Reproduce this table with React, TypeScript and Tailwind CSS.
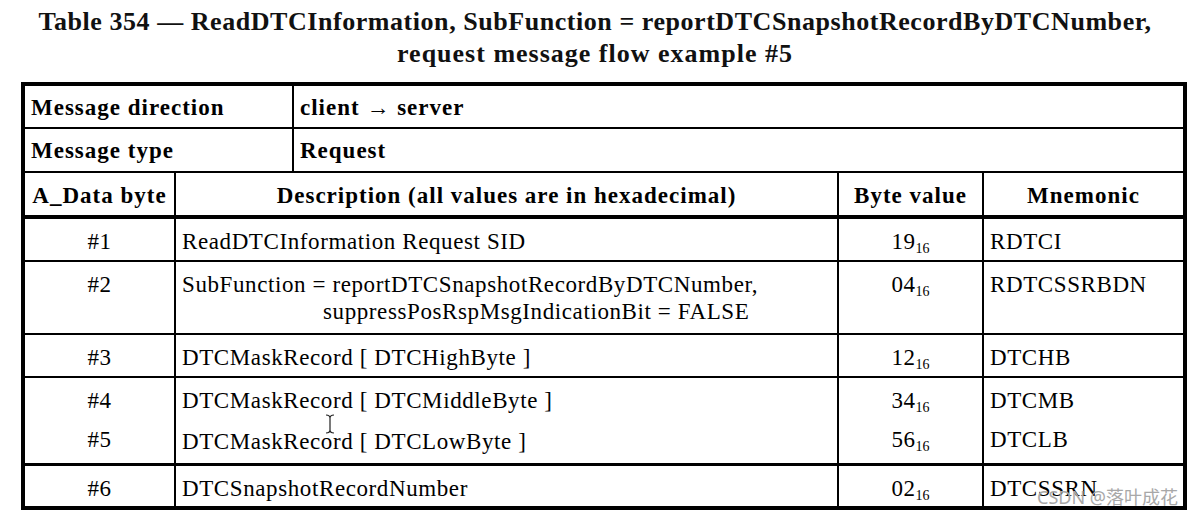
import React from 'react';

const serif = "font-['Liberation_Serif','Times_New_Roman',serif]";

function Hex({ v }: { v: string }) {
  return (
    <span>
      {v}
      <sub className="text-[14px] tracking-normal">16</sub>
    </span>
  );
}

const rows = [
  { n: ['#1'], desc: ['ReadDTCInformation Request SID'], val: ['19'], mn: ['RDTCI'], h: 'h-[43px]', b: 'border-b-2' },
  { n: ['#2'], desc: ['SubFunction = reportDTCSnapshotRecordByDTCNumber,'], desc2: 'suppressPosRspMsgIndicationBit = FALSE', val: ['04'], mn: ['RDTCSSRBDN'], h: 'h-[73px]', b: 'border-b-2' },
  { n: ['#3'], desc: ['DTCMaskRecord [ DTCHighByte ]'], val: ['12'], mn: ['DTCHB'], h: 'h-[43px]', b: 'border-b-2' },
  { n: ['#4', '#5'], desc: ['DTCMaskRecord [ DTCMiddleByte ]', 'DTCMaskRecord [ DTCLowByte ]'], val: ['34', '56'], mn: ['DTCMB', 'DTCLB'], h: 'h-[88px]', b: 'border-b-[3px]' },
  { n: ['#6'], desc: ['DTCSnapshotRecordNumber'], val: ['02'], mn: ['DTCSSRN'], h: 'h-[40px]', b: '' },
];

export default function App() {
  return (
    <div className={`w-[1190px] h-[517px] bg-white text-black relative overflow-hidden ${serif}`}>
      {/* Title */}
      <div className="pt-[6px] text-center font-bold text-[26px] leading-[32px] tracking-[0.55px] text-[#111]">
        <div>Table 354 — ReadDTCInformation, SubFunction = reportDTCSnapshotRecordByDTCNumber,</div>
        <div className="tracking-[1px]">request message flow example #5</div>
      </div>

      {/* Table */}
      <div className="ml-[21px] mt-[12px] w-[1166px] border-4 border-black text-[23px] tracking-[0.6px]">
        <div className="flex h-[43px] border-b-2 border-black font-bold tracking-[1px]">
          <div className="w-[269px] border-r-2 border-black pl-[6px] pt-[3px] flex items-center">Message direction</div>
          <div className="flex-1 pl-[6px] pt-[3px] flex items-center">client → server</div>
        </div>
        <div className="flex h-[44px] border-b-2 border-black font-bold tracking-[1px]">
          <div className="w-[269px] border-r-2 border-black pl-[6px] pt-[3px] flex items-center">Message type</div>
          <div className="flex-1 pl-[6px] pt-[3px] flex items-center">Request</div>
        </div>
        <div className="flex h-[46px] border-b-4 border-black font-bold tracking-[1px]">
          <div className="w-[151px] border-r-2 border-black pt-[4px] flex items-center justify-center">A_Data byte</div>
          <div className="w-[663px] border-r-2 border-black pt-[4px] flex items-center justify-center">Description (all values are in hexadecimal)</div>
          <div className="w-[145px] border-r-2 border-black pt-[4px] flex items-center justify-center">Byte value</div>
          <div className="flex-1 pt-[4px] flex items-center justify-center">Mnemonic</div>
        </div>

        {rows.map((r, i) => (
          <div key={i} className={`flex ${r.h} ${r.b} border-black`}>
            <div className="w-[151px] border-r-2 border-black flex flex-col items-center justify-between pt-[9px] pb-[10px]">
              {r.n.map((t) => (
                <div key={t} className="leading-[27px]">{t}</div>
              ))}
            </div>
            <div className="w-[663px] border-r-2 border-black pl-[6px] flex flex-col justify-between pt-[9px] pb-[8px]">
              {r.desc.map((t) => (
                <div key={t} className="leading-[27px] whitespace-nowrap">{t}</div>
              ))}
              {r.desc2 && <div className="leading-[27px] pl-[141px] whitespace-nowrap">{r.desc2}</div>}
            </div>
            <div className="w-[145px] border-r-2 border-black flex flex-col items-center justify-between pt-[9px] pb-[10px]">
              {r.val.map((t) => (
                <div key={t} className="leading-[27px]"><Hex v={t} /></div>
              ))}
              {r.desc2 && <div className="leading-[27px]">&nbsp;</div>}
            </div>
            <div className="flex-1 pl-[6px] flex flex-col justify-between pt-[9px] pb-[10px]">
              {r.mn.map((t) => (
                <div key={t} className="leading-[27px]">{t}</div>
              ))}
              {r.desc2 && <div className="leading-[27px]">&nbsp;</div>}
            </div>
          </div>
        ))}
      </div>

      {/* text cursor */}
      <svg className="absolute left-[325px] top-[414px]" width="10" height="20" viewBox="0 0 10 20">
        <path d="M1 1 Q5 1 5 4 L5 16 Q5 19 1 19 M9 1 Q5 1 5 4 M5 16 Q5 19 9 19" fill="none" stroke="#222" strokeWidth="1.2" />
      </svg>

      {/* watermark */}
      <div className="absolute left-[1037px] top-[486px] text-[18px] leading-[22px] text-[#a8a8a8] font-['Noto_Sans','Noto_Sans_CJK_SC',sans-serif] tracking-normal">
        CSDN @落叶成花
      </div>
    </div>
  );
}
